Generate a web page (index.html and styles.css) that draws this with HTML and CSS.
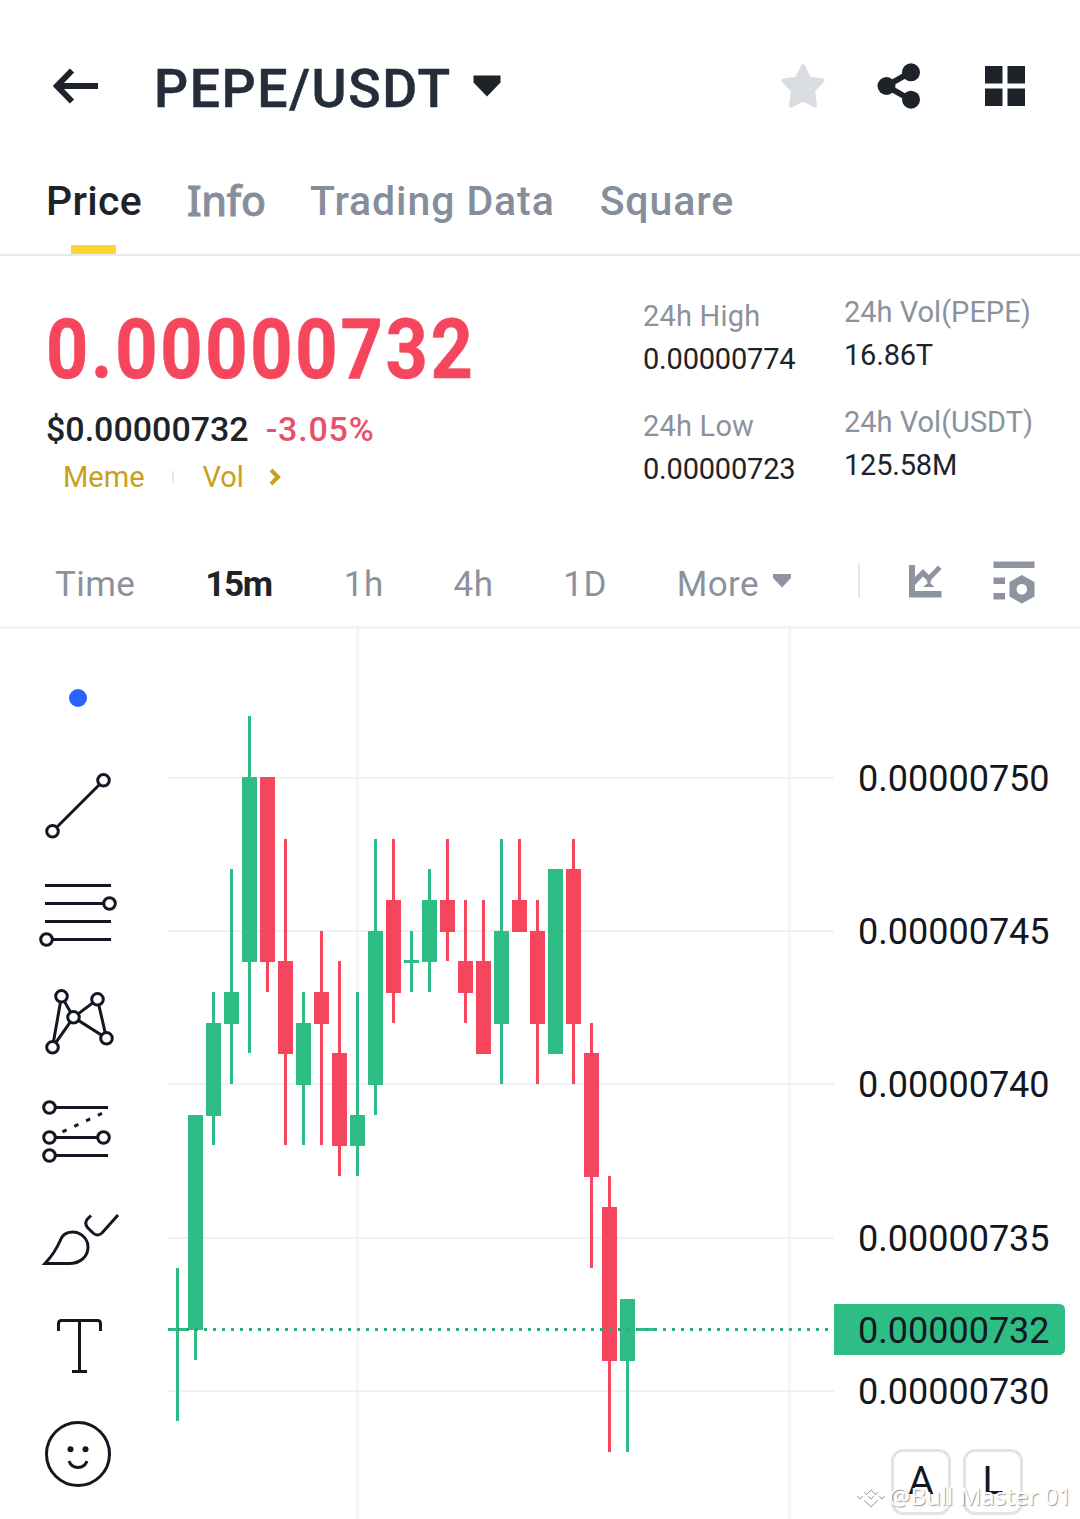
FILE: index.html
```html
<!DOCTYPE html>
<html lang="en">
  <head>
    <meta charset="UTF-8" />
    <meta name="viewport" content="width=device-width, initial-scale=1.0" />
    <title>PEPE/USDT</title>
    <link rel="stylesheet" href="styles.css">
  </head>
  <body>
    <header class="header">
      <svg class="back" width="46" height="36" viewBox="0 0 46 36">
        <path d="M19 2.500 L4 18 L19 33.500 M4 18 H45" fill="none" stroke="#1e2329" stroke-width="6" />
      </svg>
      <h1 class="pair">PEPE/USDT</h1>
      <svg class="pair-caret" width="28" height="22" viewBox="0 0 28 22">
        <path d="M0.500 0.500 H27.500 V7.500 L14 21.500 L0.500 7.500 Z" fill="#1e2329" />
      </svg>
      <div class="header-actions">
        <svg width="46" height="46" viewBox="0 0 46 46">
          <path d="M23 3 L29 15.500 L42.500 17.500 L33 27.500 L35 42.500 L23 36.500 L11 42.500 L13 27.500 L3.500 17.500 L17 15.500 Z" fill="#d9dce1" stroke="#d9dce1" stroke-width="4" stroke-linejoin="round" />
        </svg>
        <svg width="44" height="46" viewBox="0 0 44 46">
          <path d="M34 9 L9.500 23 L34 37" fill="none" stroke="#1e2329" stroke-width="6" />
          <circle cx="9.500" cy="23" r="9" fill="#1e2329" />
          <circle cx="34" cy="9.300" r="9" fill="#1e2329" />
          <circle cx="34" cy="36.700" r="9" fill="#1e2329" />
        </svg>
        <svg width="40" height="40" viewBox="0 0 40 40">
          <path d="M0 0h17.500v17.500h-17.500z M22.500 0h17.500v17.500h-17.500z M0 22.500h17.500v17.500h-17.500z M22.500 22.500h17.500v17.500h-17.500z" fill="#1e2329" />
        </svg>
      </div>
    </header>

    <nav class="tabs">
      <span class="tab active">Price</span>
      <span class="tab info">Info</span>
      <span class="tab">Trading Data</span>
      <span class="tab">Square</span>
    </nav>

    <section class="ticker">
      <div class="price-block">
        <div class="last-price">0.00000732</div>
        <div class="fiat"><span>$0.00000732</span><span class="change">-3.05%</span></div>
        <div class="tags">
          <span>Meme</span>
          <i class="tag-sep"></i>
          <span>Vol</span>
          <svg class="chevron" width="12" height="18" viewBox="0 0 12 18">
            <path d="M2 2 L9 9 L2 16" fill="none" stroke="#c99f1c" stroke-width="4" />
          </svg>
        </div>
      </div>
      <div class="stats">
        <div class="label">24h High</div>
        <div class="value">0.00000774</div>
        <div class="label">24h Low</div>
        <div class="value">0.00000723</div>
      </div>
      <div class="stats volume">
        <div class="label">24h Vol(PEPE)</div>
        <div class="value">16.86T</div>
        <div class="label">24h Vol(USDT)</div>
        <div class="value">125.58M</div>
      </div>
    </section>

    <div class="intervals">
      <span>Time</span>
      <span class="active">15m</span>
      <span>1h</span>
      <span>4h</span>
      <span>1D</span>
      <span class="more">More
        <svg width="18" height="14" viewBox="0 0 18 14">
          <path d="M0 0 H18 V4 L9 13.500 L0 4 Z" fill="#8d949f" />
        </svg>
      </span>
      <i class="bar"></i>
      <svg class="chart-icon" width="33" height="33" viewBox="0 0 33 33">
        <path d="M0 0 H6 V12 L14 4 L20 10 L29 0.500 L32.500 4 L20 17 L14 11.500 L6 20 V26 H32.500 V32.500 H0 Z" fill="#8d949f" />
        <path d="M17 15.500 h6 l-3 3.500 z M20 17 L25.500 22 H14 Z" fill="#8d949f" />
      </svg>
      <svg class="settings-icon" width="42" height="43" viewBox="0 0 42 43">
        <path d="M0.500 0.500 h41 v6.500 h-41 z M0.500 16.500 h11.500 v6.500 h-11.500 z M0.500 32 h11.500 v6.500 h-11.500 z" fill="#8d949f" />
        <path d="M28.800 14 L41.500 21 V35.500 L28.800 42.500 L16.500 35.500 V21 Z M28.800 23 a5.300 5.300 0 1 0 0.010 0 Z" fill="#8d949f" fill-rule="evenodd" />
      </svg>
    </div>

    <main class="chart">
      <div class="tools">
        <svg viewBox="0 0 156 108"><circle cx="78" cy="54" r="9" fill="#2962ff" stroke="none" /></svg>
        <svg viewBox="0 0 156 108">
          <path d="M57 75 L99 33" />
          <circle cx="103.500" cy="28.300" r="5.800" />
          <circle cx="52.500" cy="79.300" r="5.800" />
        </svg>
        <svg viewBox="0 0 156 108">
          <path d="M45 25.500 H111 M45 43.500 H104 M45 61.500 H111 M52 79.500 H111" />
          <circle cx="109.500" cy="43.500" r="5.800" />
          <circle cx="46.500" cy="79.500" r="5.800" />
        </svg>
        <svg viewBox="0 0 156 108">
          <path d="M61.500 28.300 L52.500 79.300 L73.500 49.300 Z M97.500 31.300 L106.500 70.300 L73.500 49.300 Z" />
          <g fill="#fff">
            <circle cx="61.500" cy="28.300" r="5.800" />
            <circle cx="97.500" cy="31.300" r="5.800" />
            <circle cx="73.500" cy="49.300" r="5.800" />
            <circle cx="106.500" cy="70.300" r="5.800" />
            <circle cx="52.500" cy="79.300" r="5.800" />
          </g>
        </svg>
        <svg viewBox="0 0 156 108">
          <path d="M55 31.500 H108 M55 61.500 H98 M55 79.500 H108" />
          <path d="M62.500 55.800 L104 36.500" stroke-dasharray="4.500 8.500" />
          <circle cx="49.500" cy="31.500" r="5.800" />
          <circle cx="49.500" cy="61.500" r="5.800" />
          <circle cx="103.500" cy="61.500" r="5.800" />
          <circle cx="49.500" cy="79.500" r="5.800" />
        </svg>
        <svg viewBox="0 0 156 108">
          <path d="M45 79.500 C52 72 57 64 60 57 C62 51 67 48 72.500 48 C81 48 88 55 88 63 C88 73 80 79.500 69 79.500 Z" />
          <path d="M91 31.500 L87.500 35 Q84 39 87.500 43.500 L93 49 Q97.500 53 102 49 L118 31" />
        </svg>
        <svg viewBox="0 0 156 108">
          <path d="M58.500 39 V31.500 Q58.500 28.500 61.500 28.500 H97.500 Q100.500 28.500 100.500 31.500 V39 M79.500 28.500 V79 M72 79.500 H87" />
        </svg>
        <svg viewBox="0 0 156 108">
          <circle cx="78" cy="54" r="31.500" />
          <circle cx="70.500" cy="49.300" r="3" fill="#131722" stroke="none" />
          <circle cx="85.500" cy="49.300" r="3" fill="#131722" stroke="none" />
          <path d="M69 61 C72 69.500 84 69.500 87 61" />
        </svg>
      </div>
      <svg class="plot" id="plot" width="912" height="892" viewBox="168 627 912 892"></svg>
      <div class="scale-buttons">
        <span>A</span>
        <span>L</span>
      </div>
      <div class="watermark">
        <svg width="30" height="26" viewBox="0 0 30 26">
          <path d="M8 8.500 L15 1.500 L22 8.500 L19.500 11 L15 6.500 L10.500 11 Z M15 9.500 L18 12.500 L15 15.500 L12 12.500 Z M8 16.500 L10.500 14 L15 18.500 L19.500 14 L22 16.500 L15 23.500 Z M1 12.500 L4 9.500 L7 12.500 L4 15.500 Z M23 12.500 L26 9.500 L29 12.500 L26 15.500 Z" />
        </svg>
        <span>@Bull Master 01</span>
      </div>
    </main>

    <script>
      // [open, high, low, close], in units of 0.00000001
      const candles = [
        [732, 734, 729, 732],
        [732, 739, 731, 739],
        [739, 743, 738, 742],
        [742, 747, 740, 743],
        [744, 752, 741, 750],
        [750, 750, 743, 744],
        [744, 748, 738, 741],
        [740, 743, 738, 742],
        [743, 745, 738, 742],
        [741, 744, 737, 738],
        [738, 743, 737, 739],
        [740, 748, 739, 745],
        [746, 748, 742, 743],
        [744, 745, 743, 744],
        [744, 747, 743, 746],
        [746, 748, 744, 745],
        [744, 746, 742, 743],
        [744, 746, 741, 741],
        [742, 748, 740, 745],
        [746, 748, 745, 745],
        [745, 746, 740, 742],
        [741, 747, 741, 747],
        [747, 748, 740, 742],
        [741, 742, 734, 737],
        [736, 737, 728, 731],
        [731, 733, 728, 733],
        [732, 732, 732, 732],
      ];
      const lastPrice = 732;
      const scale = (price) => 777.15 + (750 - price) * 30.68;
      const y = (price) => Math.round(scale(price));
      const rect = (x, top, w, h, cls) =>
        `<rect class="${cls}" x="${x}" y="${top}" width="${w}" height="${h}" />`;

      let out = "";
      [750, 745, 740, 735, 730].forEach((p) => {
        out += rect(168, Math.round(scale(p) - 0.6), 666, 2, "grid");
        out += `<text x="858" y="${Math.round(scale(p) + 13.4)}">0.00000${p}</text>`;
      });
      [356.5, 788.5].forEach((x) => {
        out += rect(x, 627, 2, 892, "grid");
      });

      candles.forEach(([open, high, low, close], i) => {
        const x = 177.5 + i * 18;
        const cls = close >= open ? "up" : "down";
        out += rect(x - 1.5, y(high), 3, y(low) - y(high), cls);
        if (open === close) {
          const w = high === low || i === 0 ? 18 : 15;
          out += rect(x - w / 2, y(open) - 1, w, 3, cls);
        } else {
          const top = y(Math.max(open, close));
          const bottom = y(Math.min(open, close)) + 1;
          out += rect(x - 7.5, top, 15, bottom - top, cls);
        }
      });

      // current price line and label
      out += `<path class="last-line" d="M168 1329.500 H829" />`;
      out += `<path class="up" d="M834 1304 H1059 Q1065 1304 1065 1310 V1349 Q1065 1355 1059 1355 H834 Z" />`;
      out += `<text x="858" y="1343">0.00000${lastPrice}</text>`;
      document.getElementById("plot").innerHTML = out;
    </script>
  </body>
</html>
```

FILE: styles.css
```css
* {
  box-sizing: border-box;
}

body {
  margin: 0;
  width: 1080px;
  height: 1519px;
  overflow: hidden;
  background: #fff;
  color: #1e2329;
  font-family: Roboto, "Liberation Sans", sans-serif;
}

svg {
  display: block;
  flex: none;
}

.header {
  display: flex;
  align-items: center;
  height: 172px;
  padding: 0 55px 0 53px;
}

.pair {
  margin: 4px 0 0 55px;
  width: 300px;
  font-size: 53.5px;
  font-weight: 500;
  letter-spacing: 1.6px;
  color: #252d3a;
  white-space: nowrap;
  -webkit-text-stroke: 0.5px #252d3a;
}

.pair-caret {
  margin-left: 19px;
}

.header-actions {
  display: flex;
  align-items: center;
  margin-left: auto;
}

.header-actions svg:nth-child(2) {
  margin: 0 64px 0 51px;
}

.tabs {
  display: flex;
  height: 84px;
  padding-left: 46px;
  gap: 45px;
  border-bottom: 2px solid #e9eaeb;
  font-size: 41px;
  font-weight: 500;
  letter-spacing: 0.9px;
  line-height: 58px;
  color: #868e9b;
}

.tab {
  white-space: nowrap;
}

.tab.info {
  width: 78px;
  margin-top: -1px;
  font-family: "Noto Sans", sans-serif;
  letter-spacing: -0.3px;
  -webkit-text-stroke: 0.8px #868e9b;
}

.tab.active {
  display: flex;
  flex-direction: column;
  align-items: center;
  justify-content: space-between;
  letter-spacing: 0.3px;
  color: #1e2329;
}

.tab.active::after {
  content: "";
  width: 45px;
  height: 9px;
  background: #fcd535;
}

.ticker {
  display: flex;
  height: 287px;
  padding-top: 40px;
}

.price-block {
  width: 643px;
  padding: 2px 0 0 46px;
}

/* narrow figures with open spacing */
.last-price {
  height: 105px;
  line-height: 104px;
  font-size: 83px;
  font-weight: 700;
  letter-spacing: 3px;
  color: #f6465d;
  -webkit-text-stroke: 0.6px #f6465d;
  transform: scaleX(0.89);
  transform-origin: left;
}

.fiat {
  display: flex;
  gap: 17px;
  font-size: 34px;
  font-weight: 500;
  line-height: 52px;
}

.change {
  letter-spacing: 0.8px;
  color: #e8506a;
}

.tags {
  display: flex;
  align-items: center;
  padding: 1px 0 0 17px;
  font-size: 29px;
  line-height: 42px;
  color: #c99f1c;
}

.tag-sep {
  width: 2px;
  height: 12px;
  margin: 0 29px 0 27px;
  background: #e6e8ea;
}

.chevron {
  margin-left: 25px;
}

.stats {
  width: 200px;
  font-size: 29px;
  line-height: 44px;
  white-space: nowrap;
}

.stats .label {
  margin-bottom: 1px;
  color: #8b929d;
  line-height: 40px;
  letter-spacing: 0.2px;
}

.stats .value {
  margin-bottom: 25px;
  letter-spacing: -0.2px;
}

.volume {
  margin: -4px 0 0 1px;
}

.volume .label {
  letter-spacing: 0;
}

.intervals {
  display: flex;
  align-items: center;
  height: 86px;
  padding-left: 55px;
  border-bottom: 3px solid #f3f4f4;
  font-size: 35px;
  letter-spacing: 0.4px;
  color: #8b929d;
}

.intervals span {
  margin-right: 70px;
}

.intervals .active {
  margin-right: 72px;
  font-weight: 700;
  letter-spacing: -1.3px;
  color: #1e2329;
}

.intervals .more {
  display: flex;
  align-items: center;
  gap: 14px;
  margin-right: 67px;
}

.more svg {
  margin-top: -8px;
}

.bar {
  width: 2px;
  height: 35px;
  margin-top: -8px;
  background: #e6e8ea;
}

.chart-icon {
  margin: -6px 51px 0 auto;
}

.settings-icon {
  margin: -4px 45px 0 0;
}

.chart {
  position: relative;
  display: flex;
  height: 892px;
  margin-top: -2px;
}

.tools {
  display: flex;
  flex-direction: column;
  width: 168px;
  padding-top: 17px;
}

.tools svg {
  width: 156px;
  height: 108px;
  fill: none;
  stroke: #131722;
  stroke-width: 3;
}

.plot text {
  font-size: 36px;
  fill: #131722;
}

.grid {
  fill: #f0f2f2;
}

.up {
  fill: #2ebd85;
}

.down {
  fill: #f6465d;
}

.last-line {
  fill: none;
  stroke: #2ea97c;
  stroke-width: 3;
  stroke-dasharray: 3 6;
}

.scale-buttons {
  position: absolute;
  right: 57px;
  bottom: 4px;
  display: flex;
  gap: 12px;
}

.scale-buttons span {
  width: 60px;
  height: 66px;
  border: 3px solid #e0e3e7;
  border-radius: 12px;
  font-size: 39px;
  line-height: 58px;
  text-align: center;
  color: #131722;
}

.watermark {
  position: absolute;
  right: 8px;
  bottom: 7px;
  display: flex;
  align-items: center;
  gap: 3px;
  font-family: "Noto Sans", sans-serif;
  font-size: 24px;
  line-height: 32px;
  color: #fff;
  text-shadow: 1px 1px 1px rgba(0, 0, 0, 0.4);
  white-space: nowrap;
}

.watermark svg {
  fill: #fff;
  filter: drop-shadow(0.5px 1px 0.5px rgba(0, 0, 0, 0.45));
}
```
